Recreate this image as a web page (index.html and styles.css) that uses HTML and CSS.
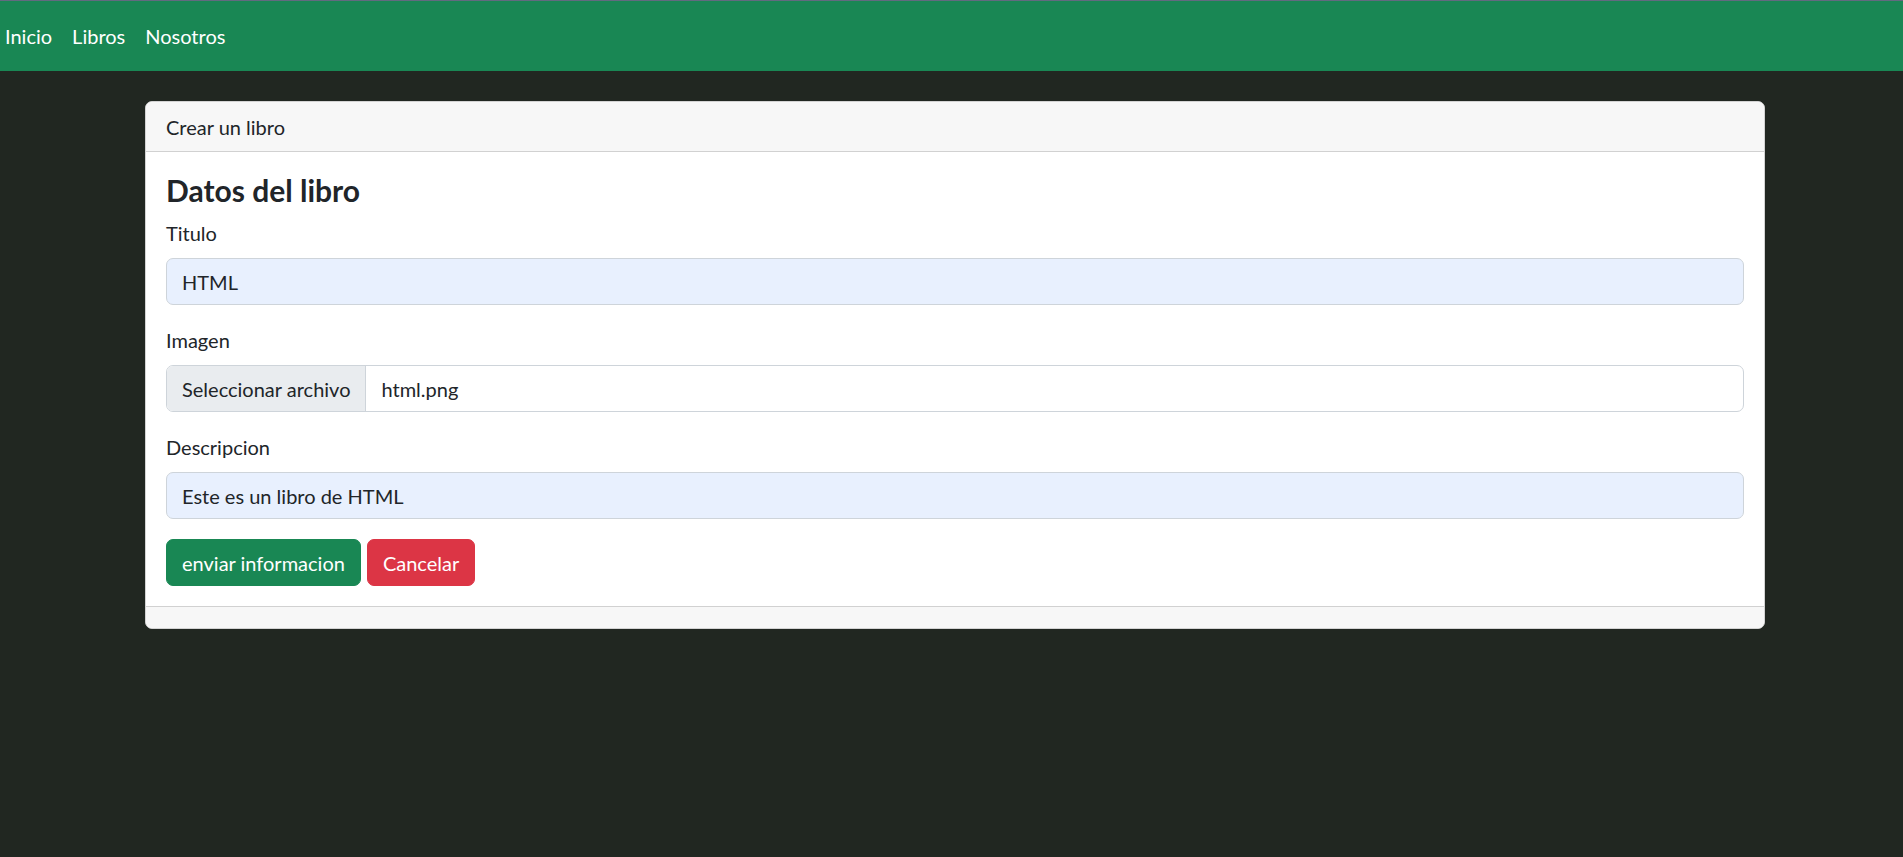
FILE: index.html
```html
<!DOCTYPE html>
<html lang="es">
<head>
<meta charset="UTF-8" />
<title>Crear un libro</title>
<link rel="stylesheet" href="styles.css">
</head>
<body>

<nav class="navbar">
  <a class="nav-link" href="#">Inicio</a>
  <a class="nav-link" href="#">Libros</a>
  <a class="nav-link" href="#">Nosotros</a>
</nav>

<main class="page">
  <div class="card">
    <div class="card-header">Crear un libro</div>
    <div class="card-body">
      <h4 class="card-title">Datos del libro</h4>
      <form>
        <div class="field">
          <label class="form-label" for="titulo">Titulo</label>
          <input class="form-control filled" type="text" id="titulo" value="HTML" />
        </div>
        <div class="field">
          <label class="form-label" for="imagen">Imagen</label>
          <div class="file-input">
            <span class="file-button">Seleccionar archivo</span>
            <span class="file-name">html.png</span>
          </div>
        </div>
        <div class="field">
          <label class="form-label" for="descripcion">Descripcion</label>
          <input class="form-control filled" type="text" id="descripcion" value="Este es un libro de HTML" />
        </div>
        <div class="actions">
          <button class="btn btn-success" type="button">enviar informacion</button>
          <a class="btn btn-danger" href="#">Cancelar</a>
        </div>
      </form>
    </div>
    <div class="card-footer"></div>
  </div>
</main>

</body>
</html>
```

FILE: styles.css
```css
body {
  margin: 0;
  background: #212721;
  font-family: Lato, "Noto Sans", sans-serif;
  font-size: 20px;
  line-height: 30px;
  color: #212529;
}
.navbar {
  display: flex;
  align-items: center;
  gap: 20px;
  height: 70px;
  padding-left: 5px;
  background: #198754;
  border-top: 1px solid #626a80;
}
.nav-link {
  color: #fff;
  text-decoration: none;
}
.page {
  padding: 30px 0 0 7px;
}
.card {
  width: 1620px;
  margin: 0 auto;
  background: #fff;
  border: 1px solid #d3d3d3;
  border-radius: 7px;
  box-sizing: border-box;
  overflow: hidden;
}
.card-header {
  padding: 10px 20px 9px;
  background: #f7f7f7;
  border-bottom: 1px solid #d1d1d1;
}
.card-body {
  padding: 20px;
}
.card-title {
  margin: 0 0 10px;
  font-size: 30px;
  line-height: 36px;
  font-weight: 700;
}
.card-footer {
  height: 21px;
  background: #f7f7f7;
  border-top: 1px solid #d1d1d1;
}
.field {
  margin-bottom: 20px;
}
.form-label {
  display: block;
  margin-bottom: 10px;
}
.form-control {
  display: block;
  width: 100%;
  box-sizing: border-box;
  padding: 7.5px 15px;
  font: inherit;
  color: #212529;
  background: #fff;
  border: 1px solid #ced4da;
  border-radius: 7px;
  outline: none;
}
.form-control.filled {
  background: #e8f0fe;
}
.file-input {
  display: flex;
  border: 1px solid #ced4da;
  border-radius: 7px;
  overflow: hidden;
}
.file-button {
  padding: 7.5px 15px;
  background: #e9ecef;
  border-right: 1px solid #ced4da;
}
.file-name {
  padding: 7.5px 15px;
}
.actions {
  display: flex;
  gap: 6px;
}
.btn {
  display: inline-block;
  padding: 7.5px 15px;
  font: inherit;
  color: #fff;
  border: 1px solid transparent;
  border-radius: 7px;
  text-decoration: none;
  cursor: pointer;
}
.btn-success {
  background: #198754;
  border-color: #198754;
}
.btn-danger {
  background: #dc3545;
  border-color: #dc3545;
}
```
